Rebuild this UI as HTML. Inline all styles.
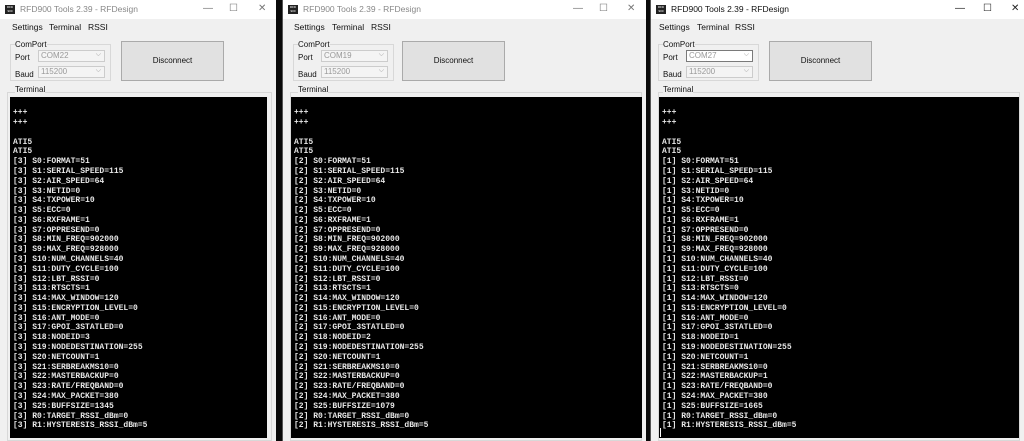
<!DOCTYPE html>
<html><head><meta charset="utf-8"><style>
*{margin:0;padding:0;box-sizing:border-box}
body{width:1024px;height:441px;background:#0a0a0a;position:relative;overflow:hidden;font-family:"Liberation Sans",sans-serif;font-size:8px;color:#000}
.win{position:absolute;top:0;height:441px;background:#f0f0f0;border-left:1px solid #555;overflow:hidden}
.tb{position:absolute;left:0;right:0;top:0;height:19px;background:#fff}
.ic{position:absolute;left:5px;top:5px;width:10px;height:9px;background:#222;color:#fff;font-size:3px;line-height:4px;text-align:center}
.tt{position:absolute;left:20px;top:4px;font-size:8.5px;color:#888}
.act .tt{color:#111}
.ctl{position:absolute;top:3px;font-size:10px;color:#777}
.mn{position:absolute;top:22px;font-size:8.5px;color:#111}
.gb{position:absolute;top:44px;left:10px;width:101px;height:37px;border:1px solid #d8d8d8}
.lab{position:absolute;font-size:8px;color:#111;background:#f0f0f0}
.cb{position:absolute;left:38px;width:67px;height:12px;border:1px solid #ccc;background:#f4f4f4;font-size:8px;color:#999;padding-left:2px;line-height:10px}
.cb:after{content:"⌵";position:absolute;right:3px;top:-1px;color:#999;font-size:7px}
.btn{position:absolute;top:41px;width:103px;height:40px;border:1px solid #aaa;background:#e1e1e1;font-size:8px;text-align:center;line-height:38px;color:#111}
.tg{position:absolute;top:92px;left:7px;right:4px;bottom:0;border:1px solid #d8d8d8}
.term{position:absolute;top:97px;bottom:3px;background:#000}
pre{position:absolute;left:3px;top:1.5px;font-family:"Liberation Mono",monospace;font-size:8px;line-height:9.78px;color:#e8e8e8;font-weight:bold}
</style></head><body>

<!-- window 1 -->
<div class="win" style="left:0;width:276px;border-left:none">
<div class="tb"><div class="ic">RFD<br>900</div><div class="tt">RFD900 Tools 2.39 - RFDesign</div>
<div class="ctl" style="left:203px">—</div><div class="ctl" style="left:229px">☐</div><div class="ctl" style="left:258px">✕</div></div>
<div class="mn" style="left:12px">Settings</div><div class="mn" style="left:49px">Terminal</div><div class="mn" style="left:88px">RSSI</div>
<div class="gb"></div><div class="lab" style="left:15px;top:40px">ComPort</div>
<div class="lab" style="left:15px;top:53px">Port</div><div class="lab" style="left:15px;top:70px">Baud</div>
<div class="cb" style="top:50px">COM22</div><div class="cb" style="top:66px">115200</div>
<div class="btn" style="left:121px">Disconnect</div>
<div class="tg"></div><div class="lab" style="left:15px;top:85px">Terminal</div>
<div class="term" style="left:10px;right:9px"><pre>

+++
+++

ATI5
ATI5
[3] S0:FORMAT=51
[3] S1:SERIAL_SPEED=115
[3] S2:AIR_SPEED=64
[3] S3:NETID=0
[3] S4:TXPOWER=10
[3] S5:ECC=0
[3] S6:RXFRAME=1
[3] S7:OPPRESEND=0
[3] S8:MIN_FREQ=902000
[3] S9:MAX_FREQ=928000
[3] S10:NUM_CHANNELS=40
[3] S11:DUTY_CYCLE=100
[3] S12:LBT_RSSI=0
[3] S13:RTSCTS=1
[3] S14:MAX_WINDOW=120
[3] S15:ENCRYPTION_LEVEL=0
[3] S16:ANT_MODE=0
[3] S17:GPOI_3STATLED=0
[3] S18:NODEID=3
[3] S19:NODEDESTINATION=255
[3] S20:NETCOUNT=1
[3] S21:SERBREAKMS10=0
[3] S22:MASTERBACKUP=0
[3] S23:RATE/FREQBAND=0
[3] S24:MAX_PACKET=380
[3] S25:BUFFSIZE=1345
[3] R0:TARGET_RSSI_dBm=0
[3] R1:HYSTERESIS_RSSI_dBm=5</pre></div>
</div>

<!-- window 2 -->
<div class="win" style="left:282px;width:364px">
<div class="tb"><div class="ic">RFD<br>900</div><div class="tt">RFD900 Tools 2.39 - RFDesign</div>
<div class="ctl" style="left:290px">—</div><div class="ctl" style="left:316px">☐</div><div class="ctl" style="left:344px">✕</div></div>
<div class="mn" style="left:11px">Settings</div><div class="mn" style="left:49px">Terminal</div><div class="mn" style="left:88px">RSSI</div>
<div class="gb"></div><div class="lab" style="left:15px;top:40px">ComPort</div>
<div class="lab" style="left:15px;top:53px">Port</div><div class="lab" style="left:15px;top:70px">Baud</div>
<div class="cb" style="top:50px">COM19</div><div class="cb" style="top:66px">115200</div>
<div class="btn" style="left:119px">Disconnect</div>
<div class="tg"></div><div class="lab" style="left:15px;top:85px">Terminal</div>
<div class="term" style="left:8px;right:4px"><pre>

+++
+++

ATI5
ATI5
[2] S0:FORMAT=51
[2] S1:SERIAL_SPEED=115
[2] S2:AIR_SPEED=64
[2] S3:NETID=0
[2] S4:TXPOWER=10
[2] S5:ECC=0
[2] S6:RXFRAME=1
[2] S7:OPPRESEND=0
[2] S8:MIN_FREQ=902000
[2] S9:MAX_FREQ=928000
[2] S10:NUM_CHANNELS=40
[2] S11:DUTY_CYCLE=100
[2] S12:LBT_RSSI=0
[2] S13:RTSCTS=1
[2] S14:MAX_WINDOW=120
[2] S15:ENCRYPTION_LEVEL=0
[2] S16:ANT_MODE=0
[2] S17:GPOI_3STATLED=0
[2] S18:NODEID=2
[2] S19:NODEDESTINATION=255
[2] S20:NETCOUNT=1
[2] S21:SERBREAKMS10=0
[2] S22:MASTERBACKUP=0
[2] S23:RATE/FREQBAND=0
[2] S24:MAX_PACKET=380
[2] S25:BUFFSIZE=1079
[2] R0:TARGET_RSSI_dBm=0
[2] R1:HYSTERESIS_RSSI_dBm=5</pre></div>
</div>

<!-- window 3 -->
<div class="win act" style="left:650px;width:374px">
<div class="tb"><div class="ic">RFD<br>900</div><div class="tt">RFD900 Tools 2.39 - RFDesign</div>
<div class="ctl" style="left:304px;color:#222">—</div><div class="ctl" style="left:332px;color:#222">☐</div><div class="ctl" style="left:360px;color:#222">✕</div></div>
<div class="mn" style="left:8px">Settings</div><div class="mn" style="left:46px">Terminal</div><div class="mn" style="left:84px">RSSI</div>
<div class="gb" style="left:7px"></div><div class="lab" style="left:12px;top:40px">ComPort</div>
<div class="lab" style="left:12px;top:53px">Port</div><div class="lab" style="left:12px;top:70px">Baud</div>
<div class="cb" style="top:50px;left:35px;border-color:#7a7a7a;background:#fff">COM27</div><div class="cb" style="top:66px;left:35px">115200</div>
<div class="btn" style="left:118px">Disconnect</div>
<div class="tg"></div><div class="lab" style="left:12px;top:85px">Terminal</div>
<div class="term" style="left:8px;right:5px"><pre>

+++
+++

ATI5
ATI5
[1] S0:FORMAT=51
[1] S1:SERIAL_SPEED=115
[1] S2:AIR_SPEED=64
[1] S3:NETID=0
[1] S4:TXPOWER=10
[1] S5:ECC=0
[1] S6:RXFRAME=1
[1] S7:OPPRESEND=0
[1] S8:MIN_FREQ=902000
[1] S9:MAX_FREQ=928000
[1] S10:NUM_CHANNELS=40
[1] S11:DUTY_CYCLE=100
[1] S12:LBT_RSSI=0
[1] S13:RTSCTS=0
[1] S14:MAX_WINDOW=120
[1] S15:ENCRYPTION_LEVEL=0
[1] S16:ANT_MODE=0
[1] S17:GPOI_3STATLED=0
[1] S18:NODEID=1
[1] S19:NODEDESTINATION=255
[1] S20:NETCOUNT=1
[1] S21:SERBREAKMS10=0
[1] S22:MASTERBACKUP=1
[1] S23:RATE/FREQBAND=0
[1] S24:MAX_PACKET=380
[1] S25:BUFFSIZE=1665
[1] R0:TARGET_RSSI_dBm=0
[1] R1:HYSTERESIS_RSSI_dBm=5</pre>
<div style="position:absolute;left:1px;top:331px;width:1px;height:9px;background:#fff"></div></div>
</div>

</body></html>
